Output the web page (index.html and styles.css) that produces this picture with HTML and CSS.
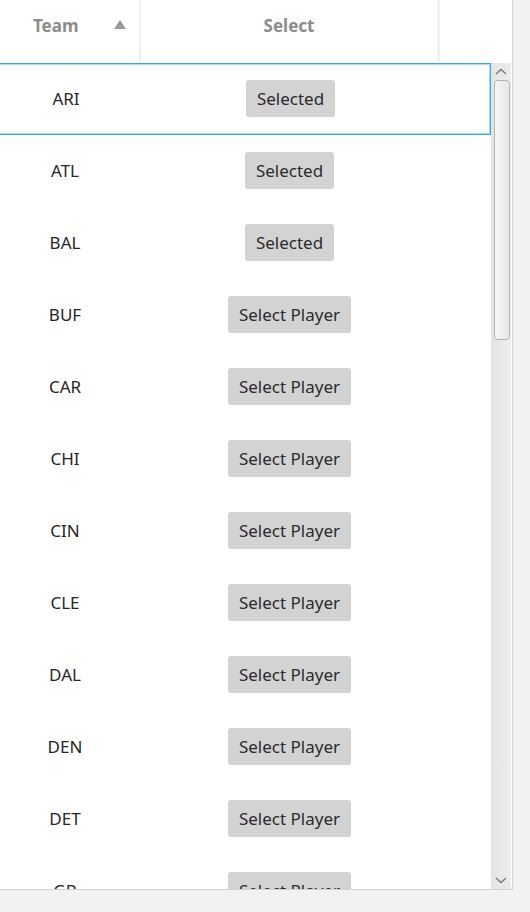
FILE: index.html
```html
<!DOCTYPE html>
<html lang="en">
<head>
    <meta charset="UTF-8">
    <meta name="viewport" content="width=device-width, initial-scale=1.0">
    <title>Team Select</title>
    <link rel="stylesheet" href="styles.css">
</head>
<body>
    <div class="grid">
        <div class="grid-head">
            <div class="head-cell team-col">
                <span class="head-label">Team</span>
                <span class="sort-arrow"></span>
            </div>
            <div class="head-cell select-col">
                <span class="head-label">Select</span>
            </div>
            <div class="head-cell filler-col"></div>
        </div>
        <div class="grid-body">
            <div class="rows">
                <div class="row row-active">
                    <div class="cell team-col">ARI</div>
                    <div class="cell select-col"><button class="pick">Selected</button></div>
                </div>
                <div class="row">
                    <div class="cell team-col">ATL</div>
                    <div class="cell select-col"><button class="pick">Selected</button></div>
                </div>
                <div class="row">
                    <div class="cell team-col">BAL</div>
                    <div class="cell select-col"><button class="pick">Selected</button></div>
                </div>
                <div class="row">
                    <div class="cell team-col">BUF</div>
                    <div class="cell select-col"><button class="pick">Select Player</button></div>
                </div>
                <div class="row">
                    <div class="cell team-col">CAR</div>
                    <div class="cell select-col"><button class="pick">Select Player</button></div>
                </div>
                <div class="row">
                    <div class="cell team-col">CHI</div>
                    <div class="cell select-col"><button class="pick">Select Player</button></div>
                </div>
                <div class="row">
                    <div class="cell team-col">CIN</div>
                    <div class="cell select-col"><button class="pick">Select Player</button></div>
                </div>
                <div class="row">
                    <div class="cell team-col">CLE</div>
                    <div class="cell select-col"><button class="pick">Select Player</button></div>
                </div>
                <div class="row">
                    <div class="cell team-col">DAL</div>
                    <div class="cell select-col"><button class="pick">Select Player</button></div>
                </div>
                <div class="row">
                    <div class="cell team-col">DEN</div>
                    <div class="cell select-col"><button class="pick">Select Player</button></div>
                </div>
                <div class="row">
                    <div class="cell team-col">DET</div>
                    <div class="cell select-col"><button class="pick">Select Player</button></div>
                </div>
                <div class="row">
                    <div class="cell team-col">GB</div>
                    <div class="cell select-col"><button class="pick">Select Player</button></div>
                </div>
            </div>
            <div class="scrollbar">
                <div class="scroll-btn">
                    <svg width="12" height="7" viewBox="0 0 12 7"><polyline points="1,6 6,1.5 11,6" fill="none" stroke="#7a7a7a" stroke-width="1.4"/></svg>
                </div>
                <div class="scroll-track">
                    <div class="scroll-thumb"></div>
                </div>
                <div class="scroll-btn">
                    <svg width="12" height="7" viewBox="0 0 12 7"><polyline points="1,1 6,5.5 11,1" fill="none" stroke="#7a7a7a" stroke-width="1.4"/></svg>
                </div>
            </div>
        </div>
    </div>
</body>
</html>
```

FILE: styles.css
```css
body {
    margin: 0;
    background-color: #f2f2f2;
    font-family: 'Noto Sans', 'Open Sans', sans-serif;
    color: #262626;
}
.grid {
    width: 513px;
    height: 890px;
    background: #ffffff;
    border-right: 1px solid #d2d2d2;
    border-bottom: 1px solid #d2d2d2;
    box-sizing: border-box;
    overflow: hidden;
    display: flex;
    flex-direction: column;
}
.grid-head {
    height: 63px;
    display: flex;
    margin-left: -10px;
    flex-shrink: 0;
}
.head-cell {
    height: 61px;
    padding-bottom: 11px;
    display: flex;
    align-items: center;
    justify-content: center;
    box-sizing: border-box;
}
.head-label {
    font-size: 17px;
    font-weight: bold;
    color: #8c8c8c;
}
.team-col {
    width: 151px;
    flex-shrink: 0;
}
.grid-head .team-col {
    justify-content: flex-start;
    padding-left: 43px;
    padding-right: 13px;
    border-right: 2px solid #f0f0f0;
}
.sort-arrow {
    margin-left: auto;
    width: 0;
    height: 0;
    border-left: 6px solid transparent;
    border-right: 6px solid transparent;
    border-bottom: 9px solid #999999;
    margin-bottom: 2px;
}
.select-col {
    width: 299px;
    flex-shrink: 0;
}
.grid-head .select-col {
    border-right: 3px solid #f0f0f0;
}
.filler-col {
    flex: 1;
}
.grid-body {
    flex: 1;
    display: flex;
    min-height: 0;
}
.rows {
    width: 491px;
    overflow: hidden;
}
.row {
    height: 72px;
    width: 501px;
    margin-left: -10px;
    padding-bottom: 1px;
    display: flex;
    align-items: center;
    box-sizing: border-box;
    font-size: 17px;
}
.row-active {
    border: 1px solid #35ace0;
    box-shadow: inset 0 0 0 1px #a9dbf0;
}
.cell {
    display: flex;
    align-items: center;
    justify-content: center;
}
.row .team-col {
    width: 150px;
}
.row .select-col {
    width: 299px;
}
.pick {
    height: 37px;
    padding: 0 11px;
    border: none;
    border-radius: 3px;
    background-color: #d3d3d3;
    color: #2b2b2b;
    font-family: inherit;
    font-size: 17px;
}
.scrollbar {
    width: 20px;
    display: flex;
    flex-direction: column;
    background: linear-gradient(to right, #e4e4e4, #ececec);
}
.scroll-btn {
    height: 17px;
    display: flex;
    align-items: center;
    justify-content: center;
    flex-shrink: 0;
}
.scroll-track {
    flex: 1;
    padding: 0 1px 0 3px;
}
.scroll-thumb {
    height: 260px;
    border: 1px solid #b5b5b5;
    border-radius: 4px;
    box-sizing: border-box;
    background: linear-gradient(to right, #f7f7f7, #e6e6e6);
}
```
